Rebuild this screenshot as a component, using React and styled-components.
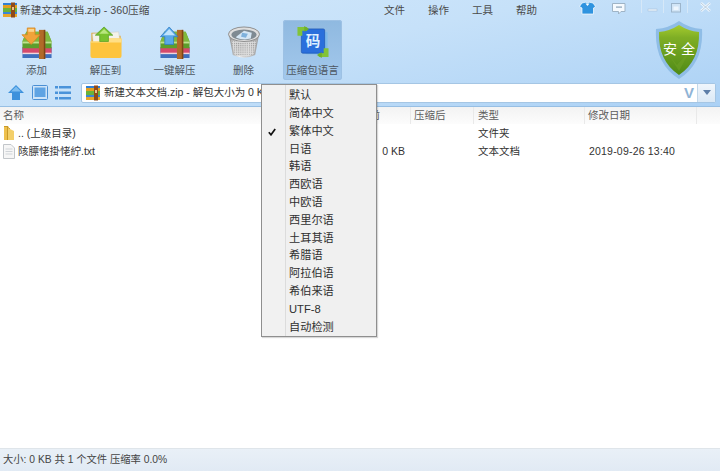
import React from "react";
import styled, { createGlobalStyle } from "styled-components";

const Global = createGlobalStyle`
  html, body { margin: 0; padding: 0; background: #fff; }
  * { box-sizing: border-box; }
`;
const Window = styled.div`
  position: relative; width: 720px; height: 471px; overflow: hidden; display: flex; flex-direction: column;
  background: #fff; color: #3c3c3c;
  font: 10.5px/1 "Liberation Sans", "Noto Sans CJK SC", sans-serif;
`;
const Chrome = styled.header`
  height: 107px; flex: none; display: flex; flex-direction: column;
  background: linear-gradient(168deg, #d2e8fb 0%, #c6e1f9 45%, #abd1f5 100%);
  border-bottom: 1px solid #97bfe4;
`;
const TitleBar = styled.div`
  height: 20px; flex: none; display: flex; align-items: center; padding-left: 2px; white-space: nowrap;
`;
const Title = styled.span`margin-left: 2px; width: 130px; flex: none; color: #4a4a4a; font-size: 10.7px;`;
const Menus = styled.nav`
  margin-left: 234px; display: flex; gap: 23px; width: 192px; flex: none; color: #4a4a4a;
`;
const WindowTools = styled.div`
  margin-left: auto; display: flex; align-items: flex-start; height: 20px; width: 144px; flex: none; position: relative;
`;
const Toolbar = styled.div`
  height: 60px; flex: none; display: flex; gap: 10px; padding-left: 7px; align-items: stretch; position: relative;
`;
const ToolButton = styled.div`
  width: 59px; display: flex; flex-direction: column; align-items: center; padding-top: 6px; border-radius: 3px;
  color: #4d5660; white-space: nowrap;
  background: ${p => (p.$active ? "linear-gradient(180deg,#8fb9e0,#a3c8ec)" : "transparent")};
  box-shadow: ${p => (p.$active ? "inset 0 0 0 1px #9dc1e4" : "none")};
  svg { flex: none; }
`;
const ToolLabel = styled.span`margin-top: 6px;`;
const Shield = styled.div`
  position: absolute; left: 655px; top: 1px; width: 48px; height: 58px;
`;
const ShieldText = styled.span`
  position: absolute; left: 0; right: 0; top: 21px; text-align: center; color: #fff; font-size: 14px; letter-spacing: 4px; padding-left: 4px;
`;
const AddressRow = styled.div`
  height: 19px; margin-top: 3px; flex: none; display: flex; align-items: center; padding-left: 7px; padding-right: 4px;
`;
const NavIcons = styled.div`display: flex; align-items: center; gap: 7px; width: 74px; flex: none;`;
const AddressBox = styled.div`
  flex: 1; height: 20px; background: #fff; border: 1px solid #a5c6e4; border-radius: 2px; display: flex; align-items: center;
  padding-left: 3px; white-space: nowrap; overflow: hidden; color: #333;
`;
const AddressText = styled.span`margin-left: 3px; flex: 1;`;
const VMark = styled.span`
  font: bold 15px/1 "Liberation Sans", sans-serif; color: #8fb4d6; margin-right: 3px;
`;
const DropButton = styled.div`
  width: 18px; height: 18px; flex: none; background: linear-gradient(180deg, #f0f6fc, #dbe9f6);
  border-left: 1px solid #c3d8ea; display: flex; align-items: center; justify-content: center;
  &::after { content: ""; border: 4px solid transparent; border-top: 5px solid #5d7ea8; border-bottom: 0; }
`;
const Columns = "345px 66px 63px 111px 112px 1fr";
const HeaderRow = styled.div`
  height: 17px; flex: none; display: grid; grid-template-columns: ${Columns}; align-items: center;
  background: linear-gradient(180deg, #f3f3f3, #fcfcfc); color: #5c5c5c;
`;
const HeaderCell = styled.div`
  height: 100%; display: flex; align-items: center; padding-left: ${p => p.$pad ?? 3}px;
  justify-content: ${p => (p.$right ? "flex-end" : "flex-start")};
  border-right: ${p => (p.$plain ? "0" : "1px solid #e9e9e9")};
  padding-right: ${p => (p.$right ? "30px" : "0")};
`;
const List = styled.div`flex: 1; background: #fff;`;
const Row = styled.div`
  height: 18px; display: grid; grid-template-columns: ${Columns}; align-items: center; color: #333;
`;
const Cell = styled.div`
  padding-left: ${p => p.$pad ?? 3}px; display: flex; align-items: center; gap: 3px; white-space: nowrap;
  justify-content: ${p => (p.$right ? "flex-end" : "flex-start")};
  padding-right: ${p => (p.$right ? "6px" : "0")};
  letter-spacing: ${p => (p.$wide ? ".2px" : "0")};
`;
const StatusBar = styled.footer`
  height: 23px; flex: none; display: flex; align-items: center; padding-left: 3px; color: #444; font-size: 10.3px;
  background: linear-gradient(180deg, #e9f0f7, #e1eaf4); border-top: 1px solid #dfe5ea;
`;
const Menu = styled.div`
  position: absolute; left: 261px; top: 84px; width: 116px; height: 253px; padding: 2px 0 0;
  font-size: 11.2px;
  background: linear-gradient(90deg, #f1f1f1 0 23px, #dcdcdc 23px 24px, #f0f0f0 24px);
  border: 1px solid #8f8f8f; box-shadow: 1px 1px 1px rgba(0,0,0,.15);
`;
const MenuItem = styled.div`
  position: relative; height: 17.8px; display: flex; align-items: center; padding-left: 27px; color: #2f2f2f;
`;
const Check = styled.svg`position: absolute; left: 6px; top: 5px;`;

const ZipIcon = ({ s = 16 }) => (
  <svg width={s} height={s} viewBox="0 0 16 16">
    <rect x="1" y="1" width="14" height="5" fill="#e2a020" />
    <rect x="1" y="1" width="14" height="2" fill="#2f7fd4" />
    <rect x="1" y="6" width="14" height="4" fill="#6bb33a" />
    <rect x="1" y="10" width="14" height="5" fill="#3a86d8" />
    <rect x="1" y="12" width="14" height="3" fill="#e8a62a" />
    <rect x="9" y="0.5" width="4" height="15" fill="#8f4a18" />
    <rect x="10" y="5" width="2" height="3" fill="#e5c48a" />
  </svg>
);

const Archive = () => (
  <>
    <path d="M2 22 L32 22 L32 33 L2 33 Z" fill="#3f6fbd" />
    <path d="M2 22 L32 22 L32 28 L2 28 Z" fill="#d54a6c" />
    <path d="M2 27.5 L32 27.5 L32 29 L2 29 Z" fill="#f2d6dc" />
    <path d="M2 16 L6 6 L28 6 L32 16 L32 23 L2 23 Z" fill="#5c9e2c" />
    <path d="M2 16 L6 6 L28 6 L32 16 Z" fill="#7fb83d" />
    <path d="M2 16 H32 V18 H2 Z" fill="#bfe28c" />
    <rect x="19" y="4" width="6.5" height="30" fill="#b16a28" />
    <rect x="24" y="4" width="1.5" height="30" fill="#7d4516" />
  </>
);
const AddIcon = () => (
  <svg width="34" height="33" viewBox="0 0 34 34">
    <Archive />
    <path d="M7 2 H15 V9 H20 L11 19 L1.5 9 H7 Z" fill="#f0a33a" stroke="#d68820" strokeWidth=".8" />
    <path d="M8 3 H14 V6 H8 Z" fill="#fbd48a" />
  </svg>
);
const ExtractIcon = () => (
  <svg width="34" height="33" viewBox="0 0 34 34">
    <path d="M2 7 H14 L16 10 H32 V32 H2 Z" fill="#e6a21f" />
    <path d="M3 8 L30 6 L32 20 L4 20 Z" fill="#f4f2ea" stroke="#cfcfc8" strokeWidth=".6" />
    <path d="M1 16 H12 L14 13 H33 V31 Q33 33 31 33 H3 Q1 33 1 31 Z" fill="#fdc43d" />
    <path d="M1 16 H12 L14 13 H33 V17 H1 Z" fill="#ffdf85" />
    <path d="M15 1 L24 9.5 H19.5 V16 H10.5 V9.5 H6 Z" fill="#79c22f" stroke="#4f9a1d" strokeWidth=".7" />
    <path d="M15 3 L20 8 H10 Z" fill="#b8e67e" />
  </svg>
);
const OneKeyIcon = () => (
  <svg width="34" height="33" viewBox="0 0 34 34">
    <Archive />
    <path d="M11 1 L20 11 H15.5 V19 H6.5 V11 H2 Z" fill="#5aa9e8" stroke="#2e7cc6" strokeWidth=".8" />
    <path d="M11 3 L17 9.5 H5 Z" fill="#bfe2fb" />
  </svg>
);
const TrashIcon = () => (
  <svg width="34" height="33" viewBox="0 0 34 34">
    <defs>
      <pattern id="mesh" width="2.2" height="2.2" patternUnits="userSpaceOnUse">
        <rect width="2.2" height="2.2" fill="#dcdcdc" />
        <rect width="1.1" height="1.1" fill="#9c9c9c" />
      </pattern>
      <linearGradient id="can" x1="0" x2="1">
        <stop offset="0" stopColor="#8c8c8c" /><stop offset=".35" stopColor="#f0f0f0" /><stop offset="1" stopColor="#9a9a9a" />
      </linearGradient>
    </defs>
    <path d="M1.5 9 L5.5 30 Q17 35.5 28.5 30 L32.5 9 Z" fill="url(#can)" />
    <path d="M4 15 L7 29 Q17 34 27 29 L30 15 Q17 19 4 15 Z" fill="url(#mesh)" />
    <ellipse cx="17" cy="8.5" rx="16" ry="7.5" fill="#dedede" stroke="#8d8d8d" />
    <ellipse cx="17" cy="9" rx="13" ry="5.5" fill="#7f8a92" />
    <path d="M9 11 L17 5 L25 7 L24 13 Q16 15 9 12 Z" fill="#d5e6f4" />
    <path d="M15 7 L21 8 L19 12 L14 11 Z" fill="#7fb1dc" />
  </svg>
);
const CodeIcon = () => (
  <svg width="34" height="33" viewBox="0 0 34 34" style={{ overflow: "visible" }}>
    <rect x="9" y="6" width="23" height="23" rx="1.5" fill="#7db8ea" />
    <rect x="5" y="3" width="24" height="25" rx="1.5" fill="#2a6fdc" stroke="#1c55b3" strokeWidth=".7" />
    <path d="M1 1 H11 V5 H6 V10 H1 Z" fill="#82c338" />
    <path d="M8 0 L13 3 L8 6 Z" fill="#6fb12a" />
    <path d="M33 32 H23 V28 H28 V23 H33 Z" fill="#82c338" />
    <path d="M26 33 L21 30 L26 27 Z" fill="#6fb12a" />
    <text x="17" y="21" textAnchor="middle" fill="#dff0ff" fontSize="15" fontWeight="bold" fontFamily="'Noto Sans CJK SC', sans-serif">码</text>
  </svg>
);
const UpIcon = () => (
  <svg width="18" height="17" viewBox="0 0 18 17">
    <path d="M9 1 L17 9 H13 V16 H5 V9 H1 Z" fill="#3d91dc" />
    <path d="M9 2.5 L14 7.5 H4 Z" fill="#7dbcef" />
  </svg>
);
const PanelIcon = () => (
  <svg width="16" height="15" viewBox="0 0 16 15">
    <rect x=".5" y=".5" width="15" height="14" rx="1" fill="#cfe4f8" stroke="#4b8fd4" />
    <rect x="2.5" y="2.5" width="11" height="9.5" fill="#5fa3e3" />
  </svg>
);
const ListIcon = () => (
  <svg width="16" height="14" viewBox="0 0 16 14" fill="#4a93da">
    <rect x="0" y="0" width="3" height="2.5" /><rect x="4" y="0" width="12" height="2.5" />
    <rect x="0" y="5.5" width="3" height="2.5" /><rect x="4" y="5.5" width="12" height="2.5" />
    <rect x="0" y="11" width="3" height="2.5" /><rect x="4" y="11" width="12" height="2.5" />
  </svg>
);
const FolderIcon = () => (
  <svg width="12" height="16" viewBox="0 0 12 16">
    <path d="M1 1 H5 L6 3 H7 V15 H1 Z" fill="#c99a28" />
    <path d="M5 3 L11 6 V15 L5 15 Z" fill="#f3cf6a" />
    <path d="M1 2 H4 V15 H1 Z" fill="#eec04d" />
  </svg>
);
const FileIcon = () => (
  <svg width="12" height="15" viewBox="0 0 12 15">
    <path d="M.5 .5 H8 L11.5 4 V14.5 H.5 Z" fill="#f6f6f6" stroke="#c2c6ca" />
    <path d="M2.5 5 H9.5 M2.5 7.5 H9.5 M2.5 10 H9.5" stroke="#d0d4d8" />
  </svg>
);
const WindowGlyphs = () => (
  <svg width="144" height="20" viewBox="0 0 144 20">
    <g transform="translate(-3 0)">
      <path d="M9 3 Q13 1.5 14.5 3 Q16 1.5 20 3 L22.5 6.5 L20.5 8 V14 H9 V8 L6.5 6.5 Z" fill="#2f93df" stroke="#fff" strokeWidth=".7" />
      <path d="M12.5 3.5 L14.5 6 L16.5 3.5" fill="#fff" />
    </g>
    <g transform="translate(-2 0)">
      <path d="M38.5 3.5 H51 V11.5 H47 L44.5 14 V11.5 H38.5 Z" fill="#f5fafe" stroke="#9fb4c6" strokeWidth="1" />
      <rect x="42" y="6.5" width="6" height="1.2" fill="#8aa2b7" />
    </g>
    <path d="M65.5 0 V13 M87.5 0 V13 M111.5 0 V13" stroke="#d6e8f8" strokeWidth="1" />
    <rect x="72" y="9" width="9" height="2" fill="#e8f2fb" stroke="#a4bdd3" strokeWidth=".5" />
    <rect x="95.5" y="3.5" width="9" height="8.5" fill="#d2e5f6" stroke="#9db5cb" strokeWidth="1" />
    <rect x="97.5" y="6.5" width="5" height="3.5" fill="#eef6fd" />
    <path d="M125 3 L134 11 M134 3 L125 11" stroke="#eef6fd" strokeWidth="2.6" />
    <path d="M125 3 L134 11 M134 3 L125 11" stroke="#a7bed3" strokeWidth=".7" />
  </svg>
);
const ShieldIcon = () => (
  <svg width="48" height="58" viewBox="0 0 48 58">
    <defs>
      <linearGradient id="sg" x1="0" x2="0" y1="0" y2="1">
        <stop offset="0" stopColor="#a6cc2e" /><stop offset=".25" stopColor="#7fae25" /><stop offset="1" stopColor="#4f8a16" />
      </linearGradient>
    </defs>
    <path d="M24 0 Q34 7 47 8 Q49 42 24 58 Q-1 42 1 8 Q14 7 24 0 Z" fill="#8fbde6" />
    <path d="M24 4 Q33 10 44 11 Q45 40 24 54 Q3 40 4 11 Q15 10 24 4 Z" fill="url(#sg)" />
    <path d="M14 34 L22 44 L36 28 L24 50 Z" fill="#6ea024" opacity=".6" />
  </svg>
);

const languages = ["默认", "简体中文", "繁体中文", "日语", "韩语", "西欧语", "中欧语", "西里尔语", "土耳其语", "希腊语", "阿拉伯语", "希伯来语", "UTF-8", "自动检测"];
const tools = [
  { label: "添加", Icon: AddIcon },
  { label: "解压到", Icon: ExtractIcon },
  { label: "一键解压", Icon: OneKeyIcon },
  { label: "删除", Icon: TrashIcon },
  { label: "压缩包语言", Icon: CodeIcon, active: true },
];

export default function App() {
  return (
    <Window>
      <Global />
      <Chrome>
        <TitleBar>
          <ZipIcon />
          <Title>新建文本文档.zip - 360压缩</Title>
          <Menus>
            <span>文件</span><span>操作</span><span>工具</span><span>帮助</span>
          </Menus>
          <WindowTools><WindowGlyphs /></WindowTools>
        </TitleBar>
        <Toolbar>
          {tools.map(({ label, Icon, active }) => (
            <ToolButton key={label} $active={active}>
              <Icon />
              <ToolLabel>{label}</ToolLabel>
            </ToolButton>
          ))}
          <Shield><ShieldIcon /><ShieldText>安全</ShieldText></Shield>
        </Toolbar>
        <AddressRow>
          <NavIcons><UpIcon /><PanelIcon /><ListIcon /></NavIcons>
          <AddressBox>
            <ZipIcon />
            <AddressText>新建文本文档.zip - 解包大小为 0 KB</AddressText>
            <VMark>V</VMark>
            <DropButton />
          </AddressBox>
        </AddressRow>
      </Chrome>
      <HeaderRow>
        <HeaderCell>名称</HeaderCell>
        <HeaderCell $right $pad={0}>压缩前</HeaderCell>
        <HeaderCell>压缩后</HeaderCell>
        <HeaderCell $pad={4}>类型</HeaderCell>
        <HeaderCell>修改日期</HeaderCell>
        <HeaderCell $plain />
      </HeaderRow>
      <List>
        <Row>
          <Cell><FolderIcon />.. (上级目录)</Cell><Cell /><Cell />
          <Cell $pad={4}>文件夹</Cell><Cell /><Cell />
        </Row>
        <Row>
          <Cell><FileIcon />陔膘恅掛恅紵.txt</Cell>
          <Cell $right>0 KB</Cell><Cell />
          <Cell $pad={4}>文本文档</Cell>
          <Cell $pad={4} $wide>2019-09-26 13:40</Cell><Cell />
        </Row>
      </List>
      <StatusBar>大小: 0 KB 共 1 个文件 压缩率 0.0%</StatusBar>
      <Menu>
        {languages.map(lang => (
          <MenuItem key={lang}>
            {lang === "繁体中文" && (
              <Check width="8" height="8" viewBox="0 0 8 8">
                <path d="M.8 4.2 L3 6.8 L7.2 1" fill="none" stroke="#111" strokeWidth="1.7" />
              </Check>
            )}
            {lang}
          </MenuItem>
        ))}
      </Menu>
    </Window>
  );
}
